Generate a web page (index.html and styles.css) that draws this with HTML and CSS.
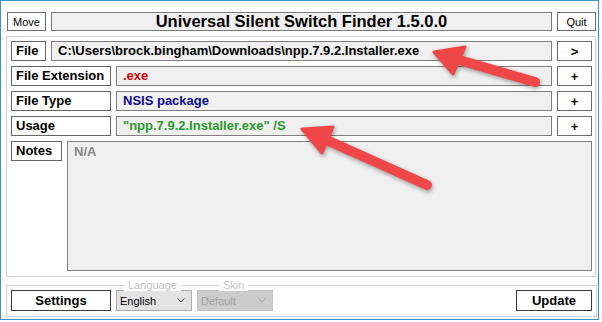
FILE: index.html
```html
<!DOCTYPE html>
<html lang="en">

<head>
  <meta charset="UTF-8" />
  <meta name="viewport" content="width=device-width, initial-scale=1.0"/>
  <title>Universal Silent Switch Finder</title>
  <link rel="stylesheet" href="styles.css">
</head>

<body>
  <div class="window">
    <div class="topbar">
      <div class="btn small move">Move</div>
      <div class="title">Universal Silent Switch Finder 1.5.0.0</div>
      <div class="btn small quit">Quit</div>
    </div>

    <div class="group main">
      <div class="row">
        <div class="label file">File</div>
        <div class="value path">C:\Users\brock.bingham\Downloads\npp.7.9.2.Installer.exe</div>
        <div class="btn action">&gt;</div>
      </div>
      <div class="row">
        <div class="label">File Extension</div>
        <div class="value ext">.exe</div>
        <div class="btn action">+</div>
      </div>
      <div class="row">
        <div class="label">File Type</div>
        <div class="value type">NSIS package</div>
        <div class="btn action">+</div>
      </div>
      <div class="row">
        <div class="label">Usage</div>
        <div class="value usage">"npp.7.9.2.Installer.exe" /S</div>
        <div class="btn action">+</div>
      </div>
      <div class="row notes-row">
        <div class="label notes">Notes</div>
        <div class="value notes-box">N/A</div>
      </div>
    </div>

    <div class="group bottom">
      <span class="legend lang">Language</span>
      <span class="legend skin">Skin</span>
      <div class="btn wide">Settings</div>
      <div class="select">English
        <svg width="8" height="5" viewBox="0 0 8 5"><path d="M0.5 0.5 L4 4 L7.5 0.5" fill="none" stroke="#555" stroke-width="1"/></svg>
      </div>
      <div class="select disabled">Default
        <svg width="8" height="5" viewBox="0 0 8 5"><path d="M0.5 0.5 L4 4 L7.5 0.5" fill="none" stroke="#a8a8a8" stroke-width="1"/></svg>
      </div>
      <div class="btn wide update">Update</div>
    </div>

    <!-- annotation arrows drawn over the window -->
    <svg class="arrows" width="602" height="322" viewBox="0 0 602 322">
      <g fill="#f04848" stroke="#f04848">
        <line x1="535" y1="82" x2="452" y2="58" stroke-width="10" stroke-linecap="round"/>
        <polygon points="434,52 465,47 453,74" stroke-width="3" stroke-linejoin="round"/>
        <line x1="427" y1="185" x2="322" y2="138" stroke-width="10" stroke-linecap="round"/>
        <polygon points="302,129 333,127 322,153" stroke-width="3" stroke-linejoin="round"/>
      </g>
    </svg>
  </div>
</body>

</html>
```

FILE: styles.css
```css
* { box-sizing: border-box; }
body { margin: 0; padding: 0; font-family: "Liberation Sans", Arial, sans-serif; background: #ffffff; color: #000; }

.window {
  position: relative;
  width: 599px;
  height: 320px;
  border: 1px solid #3a93c6;
  padding-top: 11px;
  background: #ffffff;
}

.topbar { display: flex; margin-left: 6px; gap: 5px; }
.btn {
  display: flex;
  align-items: center;
  justify-content: center;
  background: #ffffff;
  border: 1px solid #6c6c6c;
}
.btn.small { width: 39px; height: 19px; font-size: 11px; }
.title {
  width: 501px;
  height: 19px;
  background: #f0f0f0;
  border: 1px solid #7a7a7a;
  font-size: 16.5px;
  font-weight: bold;
  text-align: center;
  line-height: 17px;
}

.group { border: 1px solid #d2d2d2; margin-left: 5px; }
.main {
  margin-top: 5px;
  width: 590px;
  height: 241px;
  padding: 4px 3px 5px 4px;
  display: flex;
  flex-direction: column;
  gap: 5px;
}
.row { display: flex; gap: 5px; height: 20px; }
.label {
  width: 100px;
  height: 20px;
  border: 1px solid #666666;
  background: #ffffff;
  font-size: 13px;
  font-weight: bold;
  line-height: 18px;
  padding-left: 4px;
  white-space: nowrap;
}
.label.file { width: 35px; }
.label.notes { width: 51px; }
.value {
  flex: 1;
  background: #f0f0f0;
  border: 1px solid #7f7f7f;
  font-size: 13px;
  font-weight: bold;
  line-height: 18px;
  padding-left: 6px;
  white-space: nowrap;
  overflow: hidden;
}
.ext { color: #d10000; }
.type { color: #0b0b8c; }
.usage { color: #2b9a2b; }
.btn.action { width: 35px; height: 20px; font-size: 13px; font-weight: bold; }
.notes-row { flex: 1; height: auto; align-items: flex-start; }
.notes-box { height: 100%; color: #8a8a8a; line-height: 20px; }

.bottom {
  position: relative;
  margin-top: 8px;
  width: 591px;
  height: 32px;
  padding: 4px 4px 4px 4px;
  display: flex;
  gap: 5px;
}
.legend {
  position: absolute;
  top: -7px;
  background: #ffffff;
  padding: 0 4px;
  font-size: 11px;
  line-height: 12px;
  color: #c4c4c4;
}
.legend.lang { left: 117px; }
.legend.skin { left: 212px; }
.btn.wide {
  width: 100px;
  height: 21px;
  border-color: #3a3a3a;
  font-size: 13px;
  font-weight: bold;
}
.btn.update { width: 76px; margin-left: auto; }
.select {
  width: 76px;
  height: 21px;
  background: #e3e3e3;
  border: 1px solid #adadad;
  font-size: 11px;
  padding: 0 6px 0 3px;
  display: flex;
  align-items: center;
  justify-content: space-between;
}
.select.disabled { background: #cccccc; border-color: #c4c4c4; color: #a2a2a2; }

.arrows {
  position: absolute;
  left: -1px;
  top: -1px;
  pointer-events: none;
  filter: drop-shadow(1px 2px 2px rgba(0, 0, 0, 0.35));
}
```
